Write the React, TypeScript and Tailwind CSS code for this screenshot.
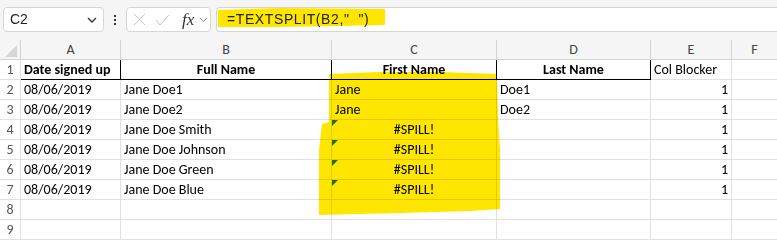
import React from "react"

const cols = ["A", "B", "C", "D", "E", "F"]

type Row = {
  a?: string
  b?: string
  c?: string
  d?: string
  e?: string
  spill?: boolean
}

const rows: Row[] = [
  { a: "08/06/2019", b: "Jane Doe1", c: "Jane", d: "Doe1", e: "1" },
  { a: "08/06/2019", b: "Jane Doe2", c: "Jane", d: "Doe2", e: "1" },
  { a: "08/06/2019", b: "Jane Doe Smith", c: "#SPILL!", e: "1", spill: true },
  { a: "08/06/2019", b: "Jane Doe Johnson", c: "#SPILL!", e: "1", spill: true },
  { a: "08/06/2019", b: "Jane Doe Green", c: "#SPILL!", e: "1", spill: true },
  { a: "08/06/2019", b: "Jane Doe Blue", c: "#SPILL!", e: "1", spill: true },
  {},
  {},
]

const grid = "grid grid-cols-[21px_100px_211px_165px_154px_81px_46px]"
const cell = "h-[20px] border-r border-b border-[#e1e1e1] px-[3px] leading-[19px] whitespace-nowrap overflow-hidden"

function FormulaBar() {
  return (
    <div className="flex h-[40px] items-start bg-[#f5f5f5] pt-[7px] pl-[3px]">
      {/* name box */}
      <div className="flex h-[25px] w-[101px] items-center justify-between rounded-[4px] border border-[#d6d6d6] bg-white pl-[6px] pr-[6px] text-[#222]">
        <span className="font-['Liberation_Sans',sans-serif] text-[14px]">C2</span>
        <svg width="10" height="6" viewBox="0 0 10 6" fill="none" stroke="#333" strokeWidth="1.4">
          <path d="M1 1l4 4 4-4" />
        </svg>
      </div>
      {/* dots */}
      <div className="flex h-[25px] w-[22px] flex-col items-center justify-center gap-[2px]">
        <span className="h-[2px] w-[2px] bg-[#333]" />
        <span className="h-[2px] w-[2px] bg-[#333]" />
        <span className="h-[2px] w-[2px] bg-[#333]" />
      </div>
      {/* function box */}
      <div className="flex h-[25px] w-[85px] items-center rounded-[4px] border border-[#d6d6d6] bg-white pl-[6px]">
        <svg width="13" height="13" viewBox="0 0 13 13" stroke="#c4c4c4" strokeWidth="1">
          <path d="M1 1l11 11M12 1L1 12" />
        </svg>
        <svg className="ml-[9px]" width="15" height="12" viewBox="0 0 15 12" fill="none" stroke="#c4c4c4" strokeWidth="1">
          <path d="M1 6l4 5L14 1" />
        </svg>
        <span className="ml-[12px] font-['Liberation_Serif',serif] text-[17px] italic leading-none text-[#333]">fx</span>
        <svg className="ml-[5px]" width="9" height="6" viewBox="0 0 9 6" fill="none" stroke="#888" strokeWidth="1">
          <path d="M1 1l3.5 3.5L8 1" />
        </svg>
      </div>
      {/* formula input */}
      <div className="relative ml-[5px] flex h-[25px] flex-1 items-center rounded-l-[4px] border border-r-0 border-[#d6d6d6] bg-white">
        <svg className="absolute left-0 top-0 mix-blend-multiply" width="170" height="24" viewBox="0 0 170 24">
          <polygon points="1,2 60,0 168,1 168,17 120,18 60,19 1,19" fill="#ffe600" />
        </svg>
        <span className="relative pl-[10px] font-['Liberation_Sans',sans-serif] text-[14px] tracking-[0.6px] text-[#222]">
          =TEXTSPLIT(B2,"&nbsp;&nbsp;")
        </span>
      </div>
    </div>
  )
}

function Sheet() {
  return (
    <div className="relative">
      {/* column headers */}
      <div className={`${grid} bg-[#f5f5f5] text-[#444]`}>
        <div className="relative h-[20px] border-r border-b border-[#d4d4d4]">
          <svg className="absolute right-[3px] bottom-[2px]" width="12" height="12" viewBox="0 0 12 12">
            <polygon points="12,0 12,12 0,12" fill="#d6d6d6" />
          </svg>
        </div>
        {cols.map((c) => (
          <div key={c} className="h-[20px] border-r border-b border-[#d4d4d4] text-center text-[14px] leading-[20px]">
            {c}
          </div>
        ))}
      </div>

      {/* row 1 */}
      <div className={`${grid} text-[14px] text-black`}>
        <div className={`${cell} text-center text-[#555]`}>1</div>
        <div className={`${cell} border-r-black border-b-black font-bold`}>Date signed up</div>
        <div className={`${cell} border-r-black border-b-black text-center font-bold`}>Full Name</div>
        <div className={`${cell} border-r-black border-b-black text-center font-bold`}>First Name</div>
        <div className={`${cell} border-r-black border-b-black text-center font-bold`}>Last Name</div>
        <div className={cell}>Col Blocker</div>
        <div className={cell} />
      </div>

      {rows.map((r, i) => (
        <div key={i} className={`${grid} text-[14px] text-black`}>
          <div className={`${cell} text-center text-[#555]`}>{i + 2}</div>
          <div className={cell}>{r.a}</div>
          <div className={cell}>{r.b}</div>
          <div className={`${cell} relative ${r.spill ? "text-center" : ""}`}>
            {r.spill && (
              <svg className="absolute left-0 top-0" width="6" height="6" viewBox="0 0 6 6">
                <polygon points="0,0 6,0 0,6" fill="#1f7a1f" />
              </svg>
            )}
            {r.c}
          </div>
          <div className={cell}>{r.d}</div>
          <div className={`${cell} text-right`}>{r.e}</div>
          <div className={cell} />
        </div>
      ))}

      {/* marker highlight over the spill range */}
      <svg
        className="pointer-events-none absolute left-0 top-0 mix-blend-multiply"
        width="777"
        height="201"
        viewBox="0 40 777 201"
      >
        <path
          d="M329 74 L380 72 L440 72 L497 74 L498 118 L500 150 L500 209 L470 211 L400 213 L319 215 L319 150 L322 124 L329 122 Z"
          fill="#ffe600"
        />
      </svg>
    </div>
  )
}

export default function App() {
  return (
    <div className="h-[241px] w-[777px] overflow-hidden bg-white font-['Carlito','Lato',sans-serif]">
      <FormulaBar />
      <Sheet />
    </div>
  )
}
